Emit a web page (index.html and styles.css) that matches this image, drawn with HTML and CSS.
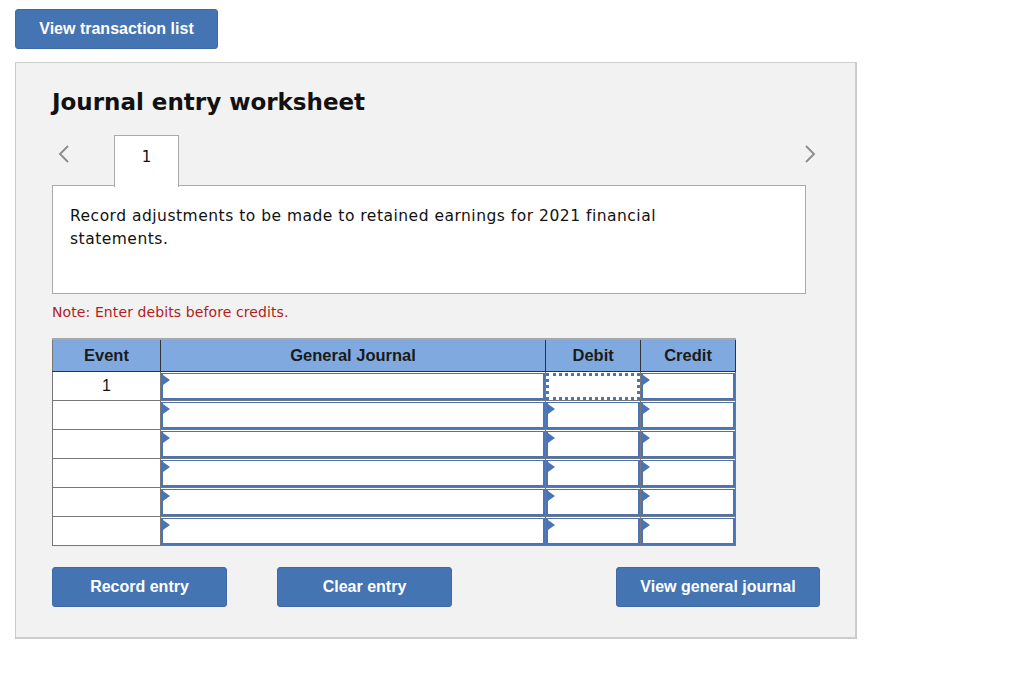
FILE: index.html
```html
<!DOCTYPE html>
<html>
<head>
<link rel="stylesheet" href="styles.css">
</head>
<body>

<button class="btn btn-top">View transaction list</button>

<div class="panel">
	<h2 class="title">Journal entry worksheet</h2>

	<!--tabs-->
	<div class="tabs">
		<span class="arrow arrow-left">
			<svg width="14" height="20" viewBox="0 0 14 20"><path d="M11 2 L3 10 L11 18" fill="none" stroke="#8a8a8a" stroke-width="1.8"/></svg>
		</span>
		<div class="tab">1</div>
		<span class="arrow arrow-right">
			<svg width="14" height="20" viewBox="0 0 14 20"><path d="M3 2 L11 10 L3 18" fill="none" stroke="#8a8a8a" stroke-width="1.8"/></svg>
		</span>
	</div>

	<div class="desc">
		Record adjustments to be made to retained earnings for 2021 financial<br>statements.
	</div>

	<p class="note">Note: Enter debits before credits.</p>

	<!--journal table-->
	<table class="journal">
		<tr>
			<th class="c-event">Event</th>
			<th class="c-acct">General Journal</th>
			<th class="c-num">Debit</th>
			<th class="c-num">Credit</th>
		</tr>
		<tr>
			<td class="event">1</td>
			<td class="inp"><div class="box"></div></td>
			<td class="inp"><div class="box focus"></div></td>
			<td class="inp"><div class="box"></div></td>
		</tr>
		<tr>
			<td class="event"></td>
			<td class="inp"><div class="box"></div></td>
			<td class="inp"><div class="box"></div></td>
			<td class="inp"><div class="box"></div></td>
		</tr>
		<tr>
			<td class="event"></td>
			<td class="inp"><div class="box"></div></td>
			<td class="inp"><div class="box"></div></td>
			<td class="inp"><div class="box"></div></td>
		</tr>
		<tr>
			<td class="event"></td>
			<td class="inp"><div class="box"></div></td>
			<td class="inp"><div class="box"></div></td>
			<td class="inp"><div class="box"></div></td>
		</tr>
		<tr>
			<td class="event"></td>
			<td class="inp"><div class="box"></div></td>
			<td class="inp"><div class="box"></div></td>
			<td class="inp"><div class="box"></div></td>
		</tr>
		<tr>
			<td class="event"></td>
			<td class="inp"><div class="box"></div></td>
			<td class="inp"><div class="box"></div></td>
			<td class="inp"><div class="box"></div></td>
		</tr>
	</table>

	<div class="actions">
		<button class="btn btn-record">Record entry</button>
		<button class="btn btn-clear">Clear entry</button>
		<button class="btn btn-view">View general journal</button>
	</div>
</div>

</body>
</html>
```

FILE: styles.css
```css
	body {
		margin: 0;
		padding: 9px 0 0 15px;
		background-color: #ffffff;
		font-family: "Liberation Sans", Arial, sans-serif;
	}

	.btn {
		display: block;
		height: 40px;
		border: 1px solid #3f6aa6;
		border-radius: 3px;
		background-color: #4574b2;
		color: #ffffff;
		font-family: "Liberation Sans", Arial, sans-serif;
		font-weight: bold;
		font-size: 16px;
		padding: 0;
	}
	.btn-top {
		width: 203px;
		margin-bottom: 13px;
	}

	.panel {
		width: 803px;
		height: 574px;
		background-color: #f2f2f2;
		border: 1px solid #cccccc;
		border-right-width: 2px;
		border-bottom-width: 2px;
		padding-left: 36px;
	}

	.title {
		margin: 27px 0 0 0;
		font-family: "DejaVu Sans", Verdana, sans-serif;
		font-size: 23px;
		font-weight: bold;
		color: #111111;
		height: 33px;
		line-height: 24px;
	}

	.tabs {
		display: flex;
		align-items: flex-start;
		width: 765px;
		height: 51px;
		margin-top: 12px;
		position: relative;
	}
	.arrow {
		display: block;
		width: 14px;
		height: 20px;
	}
	.arrow-left {
		margin: 9px 0 0 5px;
	}
	.arrow-right {
		margin: 9px 0 0 auto;
	}
	.tab {
		width: 63px;
		height: 51px;
		margin-left: 43px;
		background-color: #ffffff;
		border: 1px solid #aaaaaa;
		border-bottom: none;
		text-align: center;
		line-height: 42px;
		font-family: "DejaVu Sans", Verdana, sans-serif;
		font-size: 15px;
		color: #111111;
		position: relative;
		z-index: 1;
	}

	.desc {
		width: 735px;
		height: 88px;
		background-color: #ffffff;
		border: 1px solid #aaaaaa;
		padding: 19px 0 0 17px;
		margin-top: -1px;
		font-family: "DejaVu Sans", Verdana, sans-serif;
		font-size: 15.5px;
		letter-spacing: 0.5px;
		line-height: 23px;
		color: #111111;
	}

	.note {
		margin: 9px 0 0 0;
		height: 25px;
		font-family: "DejaVu Sans", Verdana, sans-serif;
		font-size: 14px;
		letter-spacing: 0.1px;
		color: #b0211d;
		line-height: 18px;
	}

	table.journal {
		border-collapse: collapse;
		width: 684px;
		margin-top: 10px;
	}
	.journal th {
		height: 31px;
		background-color: #80aadf;
		border: 1px solid #333333;
		border-top: 2px solid #a7a7a7;
		font-size: 16.5px;
		font-weight: bold;
		color: #1a1a1a;
		padding: 0;
	}
	.journal th.c-event {
		width: 107px;
		border-left-color: #777777;
	}
	.journal th.c-acct {
		width: 385px;
	}
	.journal th.c-num {
		width: 94px;
	}
	.journal td {
		height: 28px;
		padding: 0;
		background-color: #ffffff;
	}
	.journal td.event {
		border: 1px solid #777777;
		text-align: center;
		font-size: 16px;
		color: #111111;
	}
	.journal td.inp {
		border: 1px solid #777777;
		position: relative;
	}
	.box {
		height: 24px;
		border: 2px solid #4a74b6;
		border-top-width: 1px;
		background-color: #ffffff;
		position: relative;
	}
	.box::before {
		content: "";
		position: absolute;
		left: 0;
		top: 1px;
		border-left: 7px solid #4a74b6;
		border-top: 5px solid transparent;
		border-bottom: 5px solid transparent;
	}
	.box.focus {
		border: 3px dotted #4a74b6;
		height: 21px;
	}
	.box.focus::before {
		display: none;
	}

	.actions {
		display: flex;
		width: 768px;
		margin-top: 21px;
	}
	.btn-record {
		width: 175px;
	}
	.btn-clear {
		width: 175px;
		margin-left: 50px;
	}
	.btn-view {
		width: 204px;
		margin-left: auto;
	}
```
